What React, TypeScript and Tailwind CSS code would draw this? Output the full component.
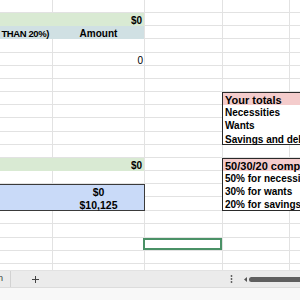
import type { ReactNode } from 'react'

const line = 'border-b border-r border-[#e2e2e2]'

function Blank() {
  return <div className={line} />
}

function blanks(n: number, key: string) {
  return Array.from({ length: n }, (_, i) => <Blank key={key + i} />)
}

function BoxCell({ children, top, bottom, header }: { children: ReactNode; top?: boolean; bottom?: boolean; header?: boolean }) {
  return (
    <div
      className={
        'col-span-2 -ml-px whitespace-nowrap border-l border-[#2a2a2a] pl-[2px] ' +
        (header ? 'bg-[#f4cccc] pt-px text-[11px] leading-[12px] ' : 'pt-[2px] leading-[11px] ') +
        (top ? 'border-t ' : '') +
        (bottom ? 'border-b ' : '')
      }
    >
      {children}
    </div>
  )
}

export default function App() {
  return (
    <div className="flex h-[300px] w-[300px] flex-col overflow-hidden bg-white font-['Liberation_Sans',Arial,sans-serif] text-[10px] font-bold text-black">
      <div className="grid grid-cols-[53px_92px_78px_67px_100px] grid-rows-[13px_13px_13px_14px_13px_13px_13px_13px_13px_14px_13px_13px_13px_13px_13px_14px_13px_14px_13px_13px_7px]">
        {/* row 1 */}
        {blanks(5, 'r0')}

        {/* row 2 */}
        <div className="col-span-2 flex justify-end border-r border-[#e2e2e2] bg-[#d9ead3] pr-[2px] pt-[2px] leading-[11px]">$0</div>
        {blanks(3, 'r1')}

        {/* row 3 */}
        <div className="flex justify-end overflow-hidden whitespace-nowrap bg-[#d0e0e3] pr-[4px] pt-[2px] text-[9.5px] leading-[11px] tracking-[-0.4px]">(LESS THAN 20%)</div>
        <div className="flex justify-center border-r border-[#e2e2e2] bg-[#d0e0e3] pt-[2px] leading-[11px]">Amount</div>
        {blanks(3, 'r2')}

        {blanks(5, 'r3')}

        {/* row 5 */}
        <Blank />
        <div className={line + ' flex justify-end pr-px pt-[2px] font-normal leading-[11px]'}>0</div>
        {blanks(3, 'r4')}

        {blanks(5, 'r5')}
        {blanks(5, 'r6')}

        {/* your totals */}
        {blanks(3, 'r7')}
        <BoxCell top header>Your totals</BoxCell>
        {blanks(3, 'r8')}
        <BoxCell>Necessities</BoxCell>
        {blanks(3, 'r9')}
        <BoxCell>Wants</BoxCell>
        {blanks(3, 'r10')}
        <BoxCell bottom>Savings and debt</BoxCell>

        {blanks(5, 'r11')}

        {/* row 13 */}
        <div className="col-span-2 flex justify-end border-r border-[#e2e2e2] bg-[#d9ead3] pr-[2px] pt-[2px] leading-[11px]">$0</div>
        <Blank />
        <BoxCell top header>50/30/20 comparison</BoxCell>

        {blanks(3, 'r13')}
        <BoxCell>50% for necessities</BoxCell>

        {/* blue totals */}
        <div className="col-span-2 row-span-2 flex flex-col border-y border-r border-[#3a3a3a] bg-[#c9daf8] text-[10.5px]">
          <div className="flex h-[12px] justify-center pl-[53px] pt-px leading-[12px]">$0</div>
          <div className="flex h-[13px] justify-center pl-[53px] pt-[2px] leading-[12px]">$10,125</div>
        </div>
        <Blank />
        <BoxCell>30% for wants</BoxCell>
        <Blank />
        <BoxCell bottom>20% for savings</BoxCell>

        {blanks(5, 'r16')}
        {blanks(5, 'r17')}

        {/* selected cell */}
        {blanks(2, 'r18a')}
        <div className={line + ' relative'}>
          <div className="absolute -left-[2px] top-0 right-0 bottom-0 border-2 border-[#4a9166]" />
        </div>
        {blanks(2, 'r18b')}

        {blanks(5, 'r19')}
        {blanks(5, 'r20')}
      </div>

      <div className="flex h-[16px] flex-none items-center bg-[#ebebeb] font-normal">
        <div className="flex h-full w-[11px] flex-none items-center justify-end overflow-hidden whitespace-nowrap border-r border-[#d2d2d2] pr-[7px] text-[9px] text-[#333]">
          Budget plan
        </div>
        <div className="flex w-[48px] flex-none justify-center">
          <svg width="7" height="7" viewBox="0 0 7 7">
            <path d="M3.5 0v7M0 3.5h7" stroke="#444" strokeWidth="1" />
          </svg>
        </div>
        <div className="ml-auto flex flex-none items-center">
          <svg width="3" height="8" viewBox="0 0 3 8">
            <circle cx="1.5" cy="1" r="0.9" fill="#555" />
            <circle cx="1.5" cy="4" r="0.9" fill="#555" />
            <circle cx="1.5" cy="7" r="0.9" fill="#555" />
          </svg>
          <svg className="ml-[11px]" width="3" height="5" viewBox="0 0 3 5">
            <path d="M3 0v5L0 2.5z" fill="#555" />
          </svg>
          <div className="ml-[2px] h-[5px] w-[51px] rounded-l-full bg-[#5f5f5f]" />
        </div>
      </div>
      <div className="flex-1 border-t border-[#dcdcdc] bg-[#f8f8f8]" />
    </div>
  )
}
